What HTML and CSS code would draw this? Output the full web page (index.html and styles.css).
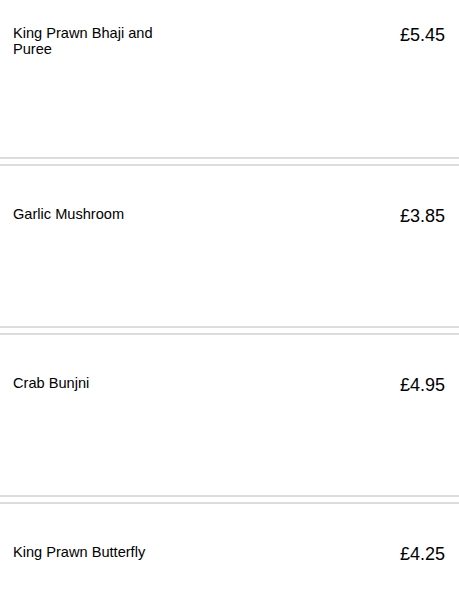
FILE: index.html
```html
<!DOCTYPE html>
<html lang="en">
<head>
  <meta charset="UTF-8">
  <meta name="viewport" content="width=device-width, initial-scale=1.0">
  <title>Starters</title>
  <link rel="stylesheet" href="styles.css">
</head>
<body>
  <div class="menu">
    <div class="item">
      <div class="name">King Prawn Bhaji and Puree</div>
      <div class="price">£5.45</div>
    </div>
    <div class="item">
      <div class="name">Garlic Mushroom</div>
      <div class="price">£3.85</div>
    </div>
    <div class="item">
      <div class="name">Crab Bunjni</div>
      <div class="price">£4.95</div>
    </div>
    <div class="item">
      <div class="name">King Prawn Butterfly</div>
      <div class="price">£4.25</div>
    </div>
  </div>
</body>
</html>
```

FILE: styles.css
```css
body {
  margin: 0;
  padding: 0;
  background-color: #fff;
  font-family: 'Liberation Sans', Arial, sans-serif;
  color: #000;
}
.menu {
  display: flex;
  flex-direction: column;
}
.item {
  display: flex;
  justify-content: space-between;
  align-items: flex-start;
  padding: 40px 14px 100px 13px;
  border-top: 2px solid #dcdcdc;
  border-bottom: 2px solid #dcdcdc;
  margin-bottom: 5px;
}
.item:first-child {
  padding-top: 25px;
  border-top: none;
}
.name {
  width: 165px;
  font-size: 14.6px;
  line-height: 16px;
}
.price {
  font-size: 18px;
  line-height: 20px;
}
```
